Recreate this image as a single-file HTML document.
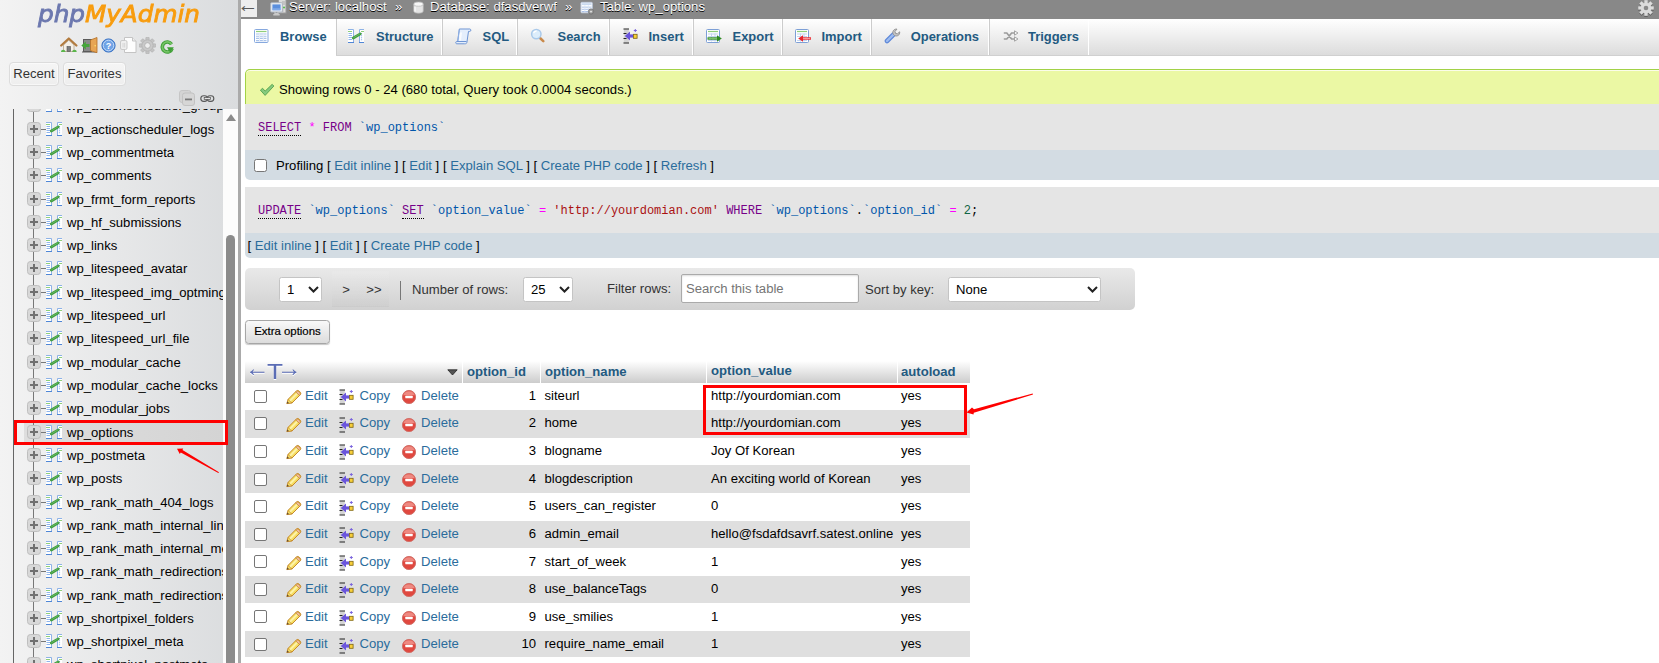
<!DOCTYPE html>
<html lang="en">
<head>
<meta charset="utf-8">
<title>localhost / localhost / dfasdverwf / wp_options | phpMyAdmin</title>
<style>
*{box-sizing:border-box}
html,body{margin:0;padding:0}
body{width:1659px;height:663px;overflow:hidden;position:relative;background:#fff;font-family:"Liberation Sans",Arial,sans-serif;font-size:13.12px;color:#000;line-height:1}
a{color:#2a6c9c;text-decoration:none}
.abs{position:absolute}

/* ---------- navigation ---------- */
#nav{position:absolute;left:0;top:0;width:238px;height:663px;background:linear-gradient(to right,#f3f3f3 0%,#dadcde 100%);overflow:hidden}
#resizer{position:absolute;left:238px;top:0;width:3px;height:663px;background:#aaa}
#logo{position:absolute;left:37.500px;top:-2.500px;font-family:"DejaVu Sans","Liberation Sans",sans-serif;font-size:23.500px;font-style:italic;line-height:32px;white-space:nowrap;transform:scaleX(1.05);transform-origin:0 0;-webkit-text-stroke:.85px currentColor}
#logo .p{color:#6c78af}
#logo .m{color:#f89c0e}
.navbtn{position:absolute;top:62px;height:24px;border:1px solid #dcdcdc;border-radius:4px;background:linear-gradient(#f5f5f5,#eeeeee);box-shadow:inset 0 0 0 1px rgba(255,255,255,.5);color:#333;font-size:13.12px;line-height:22px;text-align:center}
#tree{position:absolute;left:0;top:109px;width:223px;height:554px;overflow:hidden}
#tree .outer{position:absolute;left:13px;top:0;width:1px;height:554px;background:#666}
#tree .vline{position:absolute;left:33px;top:0;width:1px;height:554px;background:#777}
.ti{position:absolute;left:0;width:260px;height:24px;white-space:nowrap}
.ti .box{position:absolute;left:27px;top:5px;width:14px;height:14px;border:1px solid #bfbfbf;border-radius:3.500px;background:#d8d8d8}
.ti .box:before{content:"";position:absolute;left:2px;top:5px;width:8px;height:2px;background:#707070}
.ti .box:after{content:"";position:absolute;left:5px;top:2px;width:2px;height:8px;background:#707070}
.ti .hl{position:absolute;left:41px;top:12px;width:12px;height:1px;background:#777}
.ti svg{position:absolute;left:46px;top:4px}
.ti .t{position:absolute;left:67px;top:5px;font-size:13.12px;line-height:16px;color:#000}
#sbtrack{position:absolute;left:223px;top:109px;width:15px;height:554px;background:#fcfcfc}
#sbthumb{position:absolute;left:226px;top:235px;width:9px;height:440px;border-radius:5px;background:#8b8b8b}

/* ---------- main ---------- */
#topbar{position:absolute;left:241px;top:0;width:1418px;height:19px;background:#888;color:#fff;text-shadow:0 1px 0 #000;white-space:nowrap}
#topbar .tog{position:absolute;left:0;top:0;width:16px;height:17px;background:#eee;color:#5a5a5a;text-shadow:none;font-size:21px;line-height:10px;text-align:center;overflow:hidden;text-indent:-4px;letter-spacing:-2px}
#topbar .bc{position:absolute;top:-1px;font-size:13.12px;line-height:15px}
#tabs{position:absolute;left:241px;top:19px;width:1418px;height:37px;background:linear-gradient(#fff,#dcdcdc);border-bottom:1px solid #d0d0d0}
.tab{position:absolute;top:0;height:36px;border-right:1px solid #fff;border-left:1px solid #ccc;background:linear-gradient(#fff,#dddddd)}
.tab.active{background:#fff;height:37px;border-left:0}
.tab b{position:absolute;top:10px;font-size:12.95px;margin-left:-.5px;line-height:15px;color:#235a81;white-space:nowrap}
.tab svg{position:absolute;top:9px}

#ok{position:absolute;left:245px;top:69px;width:1420px;height:35px;background:#ebf8a4;border:1px solid #a2d246;border-bottom:0;border-radius:5px 5px 0 0;box-shadow:inset 0 1px 0 #fbfde9}
#ok span{position:absolute;left:33px;top:12px;line-height:16px;white-space:nowrap}
.sql{position:absolute;left:245px;width:1420px;background:#e5e5e5;font-family:"Liberation Mono","DejaVu Sans Mono",monospace;font-size:12px;white-space:pre}
.sql span.l{position:absolute;left:13px;line-height:16px}
.kw{color:#708;}
.kw u{text-decoration:none;border-bottom:1px dotted #000}
.st{color:#a11}
.nu{color:#164}
.pu{color:#05a}
.op{color:#f0f}
.tools{position:absolute;left:245px;width:1420px;background:#d3dce3;border-radius:0 0 0 5px;white-space:nowrap}
.tools span{position:absolute;line-height:16px}

#navbar{position:absolute;left:245px;top:268px;width:890px;height:42px;border-radius:5px;background:linear-gradient(#e9e9e9,#d1d1d1)}
.sel{position:absolute;height:25px;background:#fff;border:1px solid #c4c4c4;border-radius:2.500px;font-size:13.12px;line-height:23px;padding-left:7px}
.sel svg{position:absolute;right:2.500px;top:8px}
.lbl{position:absolute;line-height:16px;color:#333;white-space:nowrap}

#extra{position:absolute;left:245px;top:320px;width:85px;height:24px;border:1px solid #a6a6a6;border-radius:3.500px;background:linear-gradient(#f9f9f9,#dcdcdc);box-shadow:0 1px 1px rgba(0,0,0,.22);font-size:11.400px;line-height:21px;text-align:center;color:#000;-webkit-text-stroke:.2px #000}

#thead{position:absolute;left:245px;top:361px;width:725px;height:22px;background:linear-gradient(#fff,#cccccc)}
#thead .sep{position:absolute;top:0;width:1px;height:22px;background:#fff}
#thead .h{position:absolute;top:2px;font-weight:bold;font-size:13.12px;line-height:18px;color:#235a81;white-space:nowrap}
.row{position:absolute;left:245px;width:725px;height:27.55px;white-space:nowrap}
.row.even{background:#dfdfdf}
.row span,.row a{position:absolute;top:5px;line-height:16px}
.row .cb{position:absolute;left:9px;top:7px;width:13px;height:13px;border:1px solid #767676;border-radius:2px;background:#fff}
.row svg{position:absolute;top:6px}
.row .id{right:434px;text-align:right}
.tab .ic{position:absolute;top:9px;width:16px;height:16px}
.tab .ic svg{position:static;display:block}
.cb{position:absolute;display:block;width:13px;height:13px;border:1px solid #767676;border-radius:2.500px;background:#fff}
.pg{position:absolute;top:3px;height:36px;line-height:38px;background:linear-gradient(rgba(255,255,255,.10),rgba(0,0,0,.02));border-bottom:1px solid rgba(0,0,0,.05);text-align:center;color:#333;font-size:13.12px}
#navbar .bar{position:absolute;left:155px;top:13px;width:1px;height:19px;background:#777}
.inp{position:absolute;height:29px;background:#fff;border:1px solid #aaa;border-radius:2px;color:#757575;font-size:13.12px;line-height:27px;padding-left:4px;box-shadow:inset 0 1px 2px #ddd}
#thead .dd{position:absolute;left:202px;top:8px}
#tree .hi{position:absolute;left:24px;top:314px;width:199px;height:19px;background:linear-gradient(to right,#dedede,#d4d4d4)}
#thead .ar{position:absolute;top:-5px;font-size:24px;line-height:24px;color:#5b6db5;text-shadow:0 1px 0 #fff;transform:scaleX(1.02);transform-origin:0 0}
#thead .T{position:absolute;left:22px;top:-1px;font-size:22px;line-height:24px;color:#5b6db5;text-shadow:0 1px 0 #fff;transform:scaleX(1.19);transform-origin:0 0}
</style>
</head>
<body>

<div id="nav">
  <div id="logo"><span class="p">php</span><span class="m">MyAdmin</span></div>
  <svg class="abs" style="left:60px;top:37px" width="18" height="16" viewBox="0 0 18 16"><path d="M3.500 8v6.500h10.500v-6.500l-5.200-4.800z" fill="#f4f0e8" stroke="#b8a48a" stroke-width=".8"/><rect x="7" y="9.500" width="3.500" height="5" fill="#7d7d7d" stroke="#555" stroke-width=".6"/><path d="M1.200 8.500l7.600-7 7.600 7" fill="none" stroke="#b27b3e" stroke-width="2.200" stroke-linejoin="round" stroke-linecap="round"/><path d="M1 15c0-1.500 1-2.200 2.200-2.200s2.300.7 2.300 2.200zM12.200 15c0-1.500 1-2.200 2.300-2.200s2.200.7 2.200 2.200z" fill="#5ab54b"/></svg>
<svg class="abs" style="left:81px;top:37px" width="17" height="16" viewBox="0 0 17 16"><rect x="2.500" y="2.500" width="8" height="12" fill="#8a8a8a" stroke="#5a5a5a"/><path d="M1 15h15" stroke="#5a5a5a" stroke-width="1"/><path d="M9.500 3l6.500-2.500v15.200l-6.500-2z" fill="#e7a555" stroke="#b46f24" stroke-width=".8"/><circle cx="14.200" cy="8.800" r=".8" fill="#ffe36e"/><path d="M8.500 8.500h-5" stroke="#46a53b" stroke-width="3"/><path d="M.3 8.500l4.500-4v8z" fill="#46a53b"/></svg>
<svg class="abs" style="left:101px;top:38px" width="15" height="15" viewBox="0 0 15 15"><circle cx="7.500" cy="7.500" r="6.600" fill="#5d93dd" stroke="#3b73c4" stroke-width="1"/><circle cx="7.500" cy="7.500" r="5.300" fill="#6fa3e6" stroke="#c4dbf7" stroke-width="1"/><text x="7.500" y="10.800" text-anchor="middle" font-family="Liberation Sans,sans-serif" font-weight="bold" font-size="9" fill="#fff">?</text></svg>
<svg class="abs" style="left:120px;top:37px" width="17" height="16" viewBox="0 0 17 16"><path d="M4.500.500h8l3.500 3.500v11.500h-11.500z" fill="#fdfdfd" stroke="#c4c4c4"/><path d="M12.500.500v3.500h3.500" fill="#eee" stroke="#c4c4c4"/><rect x=".5" y="3.500" width="6.500" height="9" rx="1.500" fill="#efefef" stroke="#c9c9c9"/><path d="M3 6v4.500M4.700 6v4.500" stroke="#d6d6d6" stroke-width="1"/></svg>
<svg class="abs" style="left:139px;top:37px" width="17" height="17" viewBox="-8.500 -8.500 17 17"><g fill="#c3c3c3" stroke="#aaaaaa" stroke-width=".5"><rect x="-1.700" y="-8.200" width="3.400" height="16.400" rx=".6"/><rect x="-1.700" y="-8.200" width="3.400" height="16.400" rx=".6" transform="rotate(45)"/><rect x="-1.700" y="-8.200" width="3.400" height="16.400" rx=".6" transform="rotate(90)"/><rect x="-1.700" y="-8.200" width="3.400" height="16.400" rx=".6" transform="rotate(135)"/></g><circle r="5.600" fill="#c9c9c9" stroke="#adadad" stroke-width=".6"/><circle r="2.800" fill="#eeeeee" stroke="#a6a6a6" stroke-width=".7"/></svg>
<svg class="abs" style="left:160px;top:39px" width="14" height="15" viewBox="0 0 14 15"><path d="M11.500 5.200a5 5 0 1 0 .6 4.200" fill="none" stroke="#3f9f37" stroke-width="3.600"/><path d="M11.500 5.200a5 5 0 1 0 .6 4.200" fill="none" stroke="#74c365" stroke-width="1.800"/><path d="M7 8.200h6.800l-3.600 5.600z" fill="#3f9f37"/></svg>
<!-- tree controls -->
<svg class="abs" style="left:179px;top:90px" width="17" height="16" viewBox="0 0 17 16"><rect x=".5" y=".5" width="11.500" height="12" rx="2.500" fill="#d4d4d4" stroke="#c6c6c6"/><rect x="3.500" y="3" width="12" height="12.500" rx="2.500" fill="#d6d6d6" stroke="#c2c2c2"/><rect x="6" y="8.500" width="7" height="1.800" fill="#7a7a7a"/></svg>
<svg class="abs" style="left:200px;top:94px" width="15" height="9" viewBox="0 0 15 9"><rect x=".8" y="1.700" width="6.600" height="5.600" rx="2.800" fill="none" stroke="#585858" stroke-width="1.150"/><rect x="7.200" y="1.700" width="6.600" height="5.600" rx="2.800" fill="none" stroke="#585858" stroke-width="1.150"/><rect x="4.200" y="3.600" width="6.200" height="1.800" fill="#e2e2e2" stroke="#505050" stroke-width=".7"/></svg>

  <div class="navbtn" style="left:9px;width:50px">Recent</div>
  <div class="navbtn" style="left:63px;width:63px">Favorites</div>
  
  <div id="tree">
    <div class="hi"></div><div class="outer"></div><div class="vline"></div>
<div class="ti" style="top:-16.00px"><i class="box"></i><i class="hl"></i><svg width="16" height="16" viewBox="0 0 16 16"><path d="M0 1.500h5.500v13h-5.500z" fill="#fff"/><path d="M16 1.500h-4.500v13h4.500z" fill="#fff"/><path d="M0 1.500h5.500v13M16 1.500h-4.500v13" fill="none" stroke="#8db2e6" stroke-width="1"/><path d="M0 14.500h6M11 14.500h5" stroke="#4f86d6" stroke-width="1"/><path d="M0 3.500h4M13 3.500h3" stroke="#8fce7a" stroke-width="1"/><path d="M.5 5.500h3.500M.5 7.500h3.500M.5 9.500h3.500M.5 11.500h3.500" stroke="#8fb4ea" stroke-width="1"/><path d="M13.500 5.200v8" stroke="#8fb4ea" stroke-width="1.200" stroke-dasharray="1.100 .9"/><path d="M5.300 10l7-4.200" fill="none" stroke="#3f9b3f" stroke-width="2.700" stroke-linecap="round"/><path d="M5.700 9.600l6.200-3.700" fill="none" stroke="#6fbf66" stroke-width=".8" stroke-linecap="round"/></svg><a class="t">wp_actionscheduler_group</a></div>
<div class="ti" style="top:8.00px"><i class="box"></i><i class="hl"></i><svg width="16" height="16" viewBox="0 0 16 16"><path d="M0 1.500h5.500v13h-5.500z" fill="#fff"/><path d="M16 1.500h-4.500v13h4.500z" fill="#fff"/><path d="M0 1.500h5.500v13M16 1.500h-4.500v13" fill="none" stroke="#8db2e6" stroke-width="1"/><path d="M0 14.500h6M11 14.500h5" stroke="#4f86d6" stroke-width="1"/><path d="M0 3.500h4M13 3.500h3" stroke="#8fce7a" stroke-width="1"/><path d="M.5 5.500h3.500M.5 7.500h3.500M.5 9.500h3.500M.5 11.500h3.500" stroke="#8fb4ea" stroke-width="1"/><path d="M13.500 5.200v8" stroke="#8fb4ea" stroke-width="1.200" stroke-dasharray="1.100 .9"/><path d="M5.300 10l7-4.200" fill="none" stroke="#3f9b3f" stroke-width="2.700" stroke-linecap="round"/><path d="M5.700 9.600l6.200-3.700" fill="none" stroke="#6fbf66" stroke-width=".8" stroke-linecap="round"/></svg><a class="t">wp_actionscheduler_logs</a></div>
<div class="ti" style="top:31.00px"><i class="box"></i><i class="hl"></i><svg width="16" height="16" viewBox="0 0 16 16"><path d="M0 1.500h5.500v13h-5.500z" fill="#fff"/><path d="M16 1.500h-4.500v13h4.500z" fill="#fff"/><path d="M0 1.500h5.500v13M16 1.500h-4.500v13" fill="none" stroke="#8db2e6" stroke-width="1"/><path d="M0 14.500h6M11 14.500h5" stroke="#4f86d6" stroke-width="1"/><path d="M0 3.500h4M13 3.500h3" stroke="#8fce7a" stroke-width="1"/><path d="M.5 5.500h3.500M.5 7.500h3.500M.5 9.500h3.500M.5 11.500h3.500" stroke="#8fb4ea" stroke-width="1"/><path d="M13.500 5.200v8" stroke="#8fb4ea" stroke-width="1.200" stroke-dasharray="1.100 .9"/><path d="M5.300 10l7-4.200" fill="none" stroke="#3f9b3f" stroke-width="2.700" stroke-linecap="round"/><path d="M5.700 9.600l6.200-3.700" fill="none" stroke="#6fbf66" stroke-width=".8" stroke-linecap="round"/></svg><a class="t">wp_commentmeta</a></div>
<div class="ti" style="top:54.00px"><i class="box"></i><i class="hl"></i><svg width="16" height="16" viewBox="0 0 16 16"><path d="M0 1.500h5.500v13h-5.500z" fill="#fff"/><path d="M16 1.500h-4.500v13h4.500z" fill="#fff"/><path d="M0 1.500h5.500v13M16 1.500h-4.500v13" fill="none" stroke="#8db2e6" stroke-width="1"/><path d="M0 14.500h6M11 14.500h5" stroke="#4f86d6" stroke-width="1"/><path d="M0 3.500h4M13 3.500h3" stroke="#8fce7a" stroke-width="1"/><path d="M.5 5.500h3.500M.5 7.500h3.500M.5 9.500h3.500M.5 11.500h3.500" stroke="#8fb4ea" stroke-width="1"/><path d="M13.500 5.200v8" stroke="#8fb4ea" stroke-width="1.200" stroke-dasharray="1.100 .9"/><path d="M5.300 10l7-4.200" fill="none" stroke="#3f9b3f" stroke-width="2.700" stroke-linecap="round"/><path d="M5.700 9.600l6.200-3.700" fill="none" stroke="#6fbf66" stroke-width=".8" stroke-linecap="round"/></svg><a class="t">wp_comments</a></div>
<div class="ti" style="top:78.00px"><i class="box"></i><i class="hl"></i><svg width="16" height="16" viewBox="0 0 16 16"><path d="M0 1.500h5.500v13h-5.500z" fill="#fff"/><path d="M16 1.500h-4.500v13h4.500z" fill="#fff"/><path d="M0 1.500h5.500v13M16 1.500h-4.500v13" fill="none" stroke="#8db2e6" stroke-width="1"/><path d="M0 14.500h6M11 14.500h5" stroke="#4f86d6" stroke-width="1"/><path d="M0 3.500h4M13 3.500h3" stroke="#8fce7a" stroke-width="1"/><path d="M.5 5.500h3.500M.5 7.500h3.500M.5 9.500h3.500M.5 11.500h3.500" stroke="#8fb4ea" stroke-width="1"/><path d="M13.500 5.200v8" stroke="#8fb4ea" stroke-width="1.200" stroke-dasharray="1.100 .9"/><path d="M5.300 10l7-4.200" fill="none" stroke="#3f9b3f" stroke-width="2.700" stroke-linecap="round"/><path d="M5.700 9.600l6.200-3.700" fill="none" stroke="#6fbf66" stroke-width=".8" stroke-linecap="round"/></svg><a class="t">wp_frmt_form_reports</a></div>
<div class="ti" style="top:101.00px"><i class="box"></i><i class="hl"></i><svg width="16" height="16" viewBox="0 0 16 16"><path d="M0 1.500h5.500v13h-5.500z" fill="#fff"/><path d="M16 1.500h-4.500v13h4.500z" fill="#fff"/><path d="M0 1.500h5.500v13M16 1.500h-4.500v13" fill="none" stroke="#8db2e6" stroke-width="1"/><path d="M0 14.500h6M11 14.500h5" stroke="#4f86d6" stroke-width="1"/><path d="M0 3.500h4M13 3.500h3" stroke="#8fce7a" stroke-width="1"/><path d="M.5 5.500h3.500M.5 7.500h3.500M.5 9.500h3.500M.5 11.500h3.500" stroke="#8fb4ea" stroke-width="1"/><path d="M13.500 5.200v8" stroke="#8fb4ea" stroke-width="1.200" stroke-dasharray="1.100 .9"/><path d="M5.300 10l7-4.200" fill="none" stroke="#3f9b3f" stroke-width="2.700" stroke-linecap="round"/><path d="M5.700 9.600l6.200-3.700" fill="none" stroke="#6fbf66" stroke-width=".8" stroke-linecap="round"/></svg><a class="t">wp_hf_submissions</a></div>
<div class="ti" style="top:124.00px"><i class="box"></i><i class="hl"></i><svg width="16" height="16" viewBox="0 0 16 16"><path d="M0 1.500h5.500v13h-5.500z" fill="#fff"/><path d="M16 1.500h-4.500v13h4.500z" fill="#fff"/><path d="M0 1.500h5.500v13M16 1.500h-4.500v13" fill="none" stroke="#8db2e6" stroke-width="1"/><path d="M0 14.500h6M11 14.500h5" stroke="#4f86d6" stroke-width="1"/><path d="M0 3.500h4M13 3.500h3" stroke="#8fce7a" stroke-width="1"/><path d="M.5 5.500h3.500M.5 7.500h3.500M.5 9.500h3.500M.5 11.500h3.500" stroke="#8fb4ea" stroke-width="1"/><path d="M13.500 5.200v8" stroke="#8fb4ea" stroke-width="1.200" stroke-dasharray="1.100 .9"/><path d="M5.300 10l7-4.200" fill="none" stroke="#3f9b3f" stroke-width="2.700" stroke-linecap="round"/><path d="M5.700 9.600l6.200-3.700" fill="none" stroke="#6fbf66" stroke-width=".8" stroke-linecap="round"/></svg><a class="t">wp_links</a></div>
<div class="ti" style="top:147.00px"><i class="box"></i><i class="hl"></i><svg width="16" height="16" viewBox="0 0 16 16"><path d="M0 1.500h5.500v13h-5.500z" fill="#fff"/><path d="M16 1.500h-4.500v13h4.500z" fill="#fff"/><path d="M0 1.500h5.500v13M16 1.500h-4.500v13" fill="none" stroke="#8db2e6" stroke-width="1"/><path d="M0 14.500h6M11 14.500h5" stroke="#4f86d6" stroke-width="1"/><path d="M0 3.500h4M13 3.500h3" stroke="#8fce7a" stroke-width="1"/><path d="M.5 5.500h3.500M.5 7.500h3.500M.5 9.500h3.500M.5 11.500h3.500" stroke="#8fb4ea" stroke-width="1"/><path d="M13.500 5.200v8" stroke="#8fb4ea" stroke-width="1.200" stroke-dasharray="1.100 .9"/><path d="M5.300 10l7-4.200" fill="none" stroke="#3f9b3f" stroke-width="2.700" stroke-linecap="round"/><path d="M5.700 9.600l6.200-3.700" fill="none" stroke="#6fbf66" stroke-width=".8" stroke-linecap="round"/></svg><a class="t">wp_litespeed_avatar</a></div>
<div class="ti" style="top:171.00px"><i class="box"></i><i class="hl"></i><svg width="16" height="16" viewBox="0 0 16 16"><path d="M0 1.500h5.500v13h-5.500z" fill="#fff"/><path d="M16 1.500h-4.500v13h4.500z" fill="#fff"/><path d="M0 1.500h5.500v13M16 1.500h-4.500v13" fill="none" stroke="#8db2e6" stroke-width="1"/><path d="M0 14.500h6M11 14.500h5" stroke="#4f86d6" stroke-width="1"/><path d="M0 3.500h4M13 3.500h3" stroke="#8fce7a" stroke-width="1"/><path d="M.5 5.500h3.500M.5 7.500h3.500M.5 9.500h3.500M.5 11.500h3.500" stroke="#8fb4ea" stroke-width="1"/><path d="M13.500 5.200v8" stroke="#8fb4ea" stroke-width="1.200" stroke-dasharray="1.100 .9"/><path d="M5.300 10l7-4.200" fill="none" stroke="#3f9b3f" stroke-width="2.700" stroke-linecap="round"/><path d="M5.700 9.600l6.200-3.700" fill="none" stroke="#6fbf66" stroke-width=".8" stroke-linecap="round"/></svg><a class="t">wp_litespeed_img_optming</a></div>
<div class="ti" style="top:194.00px"><i class="box"></i><i class="hl"></i><svg width="16" height="16" viewBox="0 0 16 16"><path d="M0 1.500h5.500v13h-5.500z" fill="#fff"/><path d="M16 1.500h-4.500v13h4.500z" fill="#fff"/><path d="M0 1.500h5.500v13M16 1.500h-4.500v13" fill="none" stroke="#8db2e6" stroke-width="1"/><path d="M0 14.500h6M11 14.500h5" stroke="#4f86d6" stroke-width="1"/><path d="M0 3.500h4M13 3.500h3" stroke="#8fce7a" stroke-width="1"/><path d="M.5 5.500h3.500M.5 7.500h3.500M.5 9.500h3.500M.5 11.500h3.500" stroke="#8fb4ea" stroke-width="1"/><path d="M13.500 5.200v8" stroke="#8fb4ea" stroke-width="1.200" stroke-dasharray="1.100 .9"/><path d="M5.300 10l7-4.200" fill="none" stroke="#3f9b3f" stroke-width="2.700" stroke-linecap="round"/><path d="M5.700 9.600l6.200-3.700" fill="none" stroke="#6fbf66" stroke-width=".8" stroke-linecap="round"/></svg><a class="t">wp_litespeed_url</a></div>
<div class="ti" style="top:217.00px"><i class="box"></i><i class="hl"></i><svg width="16" height="16" viewBox="0 0 16 16"><path d="M0 1.500h5.500v13h-5.500z" fill="#fff"/><path d="M16 1.500h-4.500v13h4.500z" fill="#fff"/><path d="M0 1.500h5.500v13M16 1.500h-4.500v13" fill="none" stroke="#8db2e6" stroke-width="1"/><path d="M0 14.500h6M11 14.500h5" stroke="#4f86d6" stroke-width="1"/><path d="M0 3.500h4M13 3.500h3" stroke="#8fce7a" stroke-width="1"/><path d="M.5 5.500h3.500M.5 7.500h3.500M.5 9.500h3.500M.5 11.500h3.500" stroke="#8fb4ea" stroke-width="1"/><path d="M13.500 5.200v8" stroke="#8fb4ea" stroke-width="1.200" stroke-dasharray="1.100 .9"/><path d="M5.300 10l7-4.200" fill="none" stroke="#3f9b3f" stroke-width="2.700" stroke-linecap="round"/><path d="M5.700 9.600l6.200-3.700" fill="none" stroke="#6fbf66" stroke-width=".8" stroke-linecap="round"/></svg><a class="t">wp_litespeed_url_file</a></div>
<div class="ti" style="top:241.00px"><i class="box"></i><i class="hl"></i><svg width="16" height="16" viewBox="0 0 16 16"><path d="M0 1.500h5.500v13h-5.500z" fill="#fff"/><path d="M16 1.500h-4.500v13h4.500z" fill="#fff"/><path d="M0 1.500h5.500v13M16 1.500h-4.500v13" fill="none" stroke="#8db2e6" stroke-width="1"/><path d="M0 14.500h6M11 14.500h5" stroke="#4f86d6" stroke-width="1"/><path d="M0 3.500h4M13 3.500h3" stroke="#8fce7a" stroke-width="1"/><path d="M.5 5.500h3.500M.5 7.500h3.500M.5 9.500h3.500M.5 11.500h3.500" stroke="#8fb4ea" stroke-width="1"/><path d="M13.500 5.200v8" stroke="#8fb4ea" stroke-width="1.200" stroke-dasharray="1.100 .9"/><path d="M5.300 10l7-4.200" fill="none" stroke="#3f9b3f" stroke-width="2.700" stroke-linecap="round"/><path d="M5.700 9.600l6.200-3.700" fill="none" stroke="#6fbf66" stroke-width=".8" stroke-linecap="round"/></svg><a class="t">wp_modular_cache</a></div>
<div class="ti" style="top:264.00px"><i class="box"></i><i class="hl"></i><svg width="16" height="16" viewBox="0 0 16 16"><path d="M0 1.500h5.500v13h-5.500z" fill="#fff"/><path d="M16 1.500h-4.500v13h4.500z" fill="#fff"/><path d="M0 1.500h5.500v13M16 1.500h-4.500v13" fill="none" stroke="#8db2e6" stroke-width="1"/><path d="M0 14.500h6M11 14.500h5" stroke="#4f86d6" stroke-width="1"/><path d="M0 3.500h4M13 3.500h3" stroke="#8fce7a" stroke-width="1"/><path d="M.5 5.500h3.500M.5 7.500h3.500M.5 9.500h3.500M.5 11.500h3.500" stroke="#8fb4ea" stroke-width="1"/><path d="M13.500 5.200v8" stroke="#8fb4ea" stroke-width="1.200" stroke-dasharray="1.100 .9"/><path d="M5.300 10l7-4.200" fill="none" stroke="#3f9b3f" stroke-width="2.700" stroke-linecap="round"/><path d="M5.700 9.600l6.200-3.700" fill="none" stroke="#6fbf66" stroke-width=".8" stroke-linecap="round"/></svg><a class="t">wp_modular_cache_locks</a></div>
<div class="ti" style="top:287.00px"><i class="box"></i><i class="hl"></i><svg width="16" height="16" viewBox="0 0 16 16"><path d="M0 1.500h5.500v13h-5.500z" fill="#fff"/><path d="M16 1.500h-4.500v13h4.500z" fill="#fff"/><path d="M0 1.500h5.500v13M16 1.500h-4.500v13" fill="none" stroke="#8db2e6" stroke-width="1"/><path d="M0 14.500h6M11 14.500h5" stroke="#4f86d6" stroke-width="1"/><path d="M0 3.500h4M13 3.500h3" stroke="#8fce7a" stroke-width="1"/><path d="M.5 5.500h3.500M.5 7.500h3.500M.5 9.500h3.500M.5 11.500h3.500" stroke="#8fb4ea" stroke-width="1"/><path d="M13.500 5.200v8" stroke="#8fb4ea" stroke-width="1.200" stroke-dasharray="1.100 .9"/><path d="M5.300 10l7-4.200" fill="none" stroke="#3f9b3f" stroke-width="2.700" stroke-linecap="round"/><path d="M5.700 9.600l6.200-3.700" fill="none" stroke="#6fbf66" stroke-width=".8" stroke-linecap="round"/></svg><a class="t">wp_modular_jobs</a></div>
<div class="ti" style="top:311.00px"><i class="box"></i><i class="hl"></i><svg width="16" height="16" viewBox="0 0 16 16"><path d="M0 1.500h5.500v13h-5.500z" fill="#fff"/><path d="M16 1.500h-4.500v13h4.500z" fill="#fff"/><path d="M0 1.500h5.500v13M16 1.500h-4.500v13" fill="none" stroke="#8db2e6" stroke-width="1"/><path d="M0 14.500h6M11 14.500h5" stroke="#4f86d6" stroke-width="1"/><path d="M0 3.500h4M13 3.500h3" stroke="#8fce7a" stroke-width="1"/><path d="M.5 5.500h3.500M.5 7.500h3.500M.5 9.500h3.500M.5 11.500h3.500" stroke="#8fb4ea" stroke-width="1"/><path d="M13.500 5.200v8" stroke="#8fb4ea" stroke-width="1.200" stroke-dasharray="1.100 .9"/><path d="M5.300 10l7-4.200" fill="none" stroke="#3f9b3f" stroke-width="2.700" stroke-linecap="round"/><path d="M5.700 9.600l6.200-3.700" fill="none" stroke="#6fbf66" stroke-width=".8" stroke-linecap="round"/></svg><a class="t">wp_options</a></div>
<div class="ti" style="top:334.00px"><i class="box"></i><i class="hl"></i><svg width="16" height="16" viewBox="0 0 16 16"><path d="M0 1.500h5.500v13h-5.500z" fill="#fff"/><path d="M16 1.500h-4.500v13h4.500z" fill="#fff"/><path d="M0 1.500h5.500v13M16 1.500h-4.500v13" fill="none" stroke="#8db2e6" stroke-width="1"/><path d="M0 14.500h6M11 14.500h5" stroke="#4f86d6" stroke-width="1"/><path d="M0 3.500h4M13 3.500h3" stroke="#8fce7a" stroke-width="1"/><path d="M.5 5.500h3.500M.5 7.500h3.500M.5 9.500h3.500M.5 11.500h3.500" stroke="#8fb4ea" stroke-width="1"/><path d="M13.500 5.200v8" stroke="#8fb4ea" stroke-width="1.200" stroke-dasharray="1.100 .9"/><path d="M5.300 10l7-4.200" fill="none" stroke="#3f9b3f" stroke-width="2.700" stroke-linecap="round"/><path d="M5.700 9.600l6.200-3.700" fill="none" stroke="#6fbf66" stroke-width=".8" stroke-linecap="round"/></svg><a class="t">wp_postmeta</a></div>
<div class="ti" style="top:357.00px"><i class="box"></i><i class="hl"></i><svg width="16" height="16" viewBox="0 0 16 16"><path d="M0 1.500h5.500v13h-5.500z" fill="#fff"/><path d="M16 1.500h-4.500v13h4.500z" fill="#fff"/><path d="M0 1.500h5.500v13M16 1.500h-4.500v13" fill="none" stroke="#8db2e6" stroke-width="1"/><path d="M0 14.500h6M11 14.500h5" stroke="#4f86d6" stroke-width="1"/><path d="M0 3.500h4M13 3.500h3" stroke="#8fce7a" stroke-width="1"/><path d="M.5 5.500h3.500M.5 7.500h3.500M.5 9.500h3.500M.5 11.500h3.500" stroke="#8fb4ea" stroke-width="1"/><path d="M13.500 5.200v8" stroke="#8fb4ea" stroke-width="1.200" stroke-dasharray="1.100 .9"/><path d="M5.300 10l7-4.200" fill="none" stroke="#3f9b3f" stroke-width="2.700" stroke-linecap="round"/><path d="M5.700 9.600l6.200-3.700" fill="none" stroke="#6fbf66" stroke-width=".8" stroke-linecap="round"/></svg><a class="t">wp_posts</a></div>
<div class="ti" style="top:381.00px"><i class="box"></i><i class="hl"></i><svg width="16" height="16" viewBox="0 0 16 16"><path d="M0 1.500h5.500v13h-5.500z" fill="#fff"/><path d="M16 1.500h-4.500v13h4.500z" fill="#fff"/><path d="M0 1.500h5.500v13M16 1.500h-4.500v13" fill="none" stroke="#8db2e6" stroke-width="1"/><path d="M0 14.500h6M11 14.500h5" stroke="#4f86d6" stroke-width="1"/><path d="M0 3.500h4M13 3.500h3" stroke="#8fce7a" stroke-width="1"/><path d="M.5 5.500h3.500M.5 7.500h3.500M.5 9.500h3.500M.5 11.500h3.500" stroke="#8fb4ea" stroke-width="1"/><path d="M13.500 5.200v8" stroke="#8fb4ea" stroke-width="1.200" stroke-dasharray="1.100 .9"/><path d="M5.300 10l7-4.200" fill="none" stroke="#3f9b3f" stroke-width="2.700" stroke-linecap="round"/><path d="M5.700 9.600l6.200-3.700" fill="none" stroke="#6fbf66" stroke-width=".8" stroke-linecap="round"/></svg><a class="t">wp_rank_math_404_logs</a></div>
<div class="ti" style="top:404.00px"><i class="box"></i><i class="hl"></i><svg width="16" height="16" viewBox="0 0 16 16"><path d="M0 1.500h5.500v13h-5.500z" fill="#fff"/><path d="M16 1.500h-4.500v13h4.500z" fill="#fff"/><path d="M0 1.500h5.500v13M16 1.500h-4.500v13" fill="none" stroke="#8db2e6" stroke-width="1"/><path d="M0 14.500h6M11 14.500h5" stroke="#4f86d6" stroke-width="1"/><path d="M0 3.500h4M13 3.500h3" stroke="#8fce7a" stroke-width="1"/><path d="M.5 5.500h3.500M.5 7.500h3.500M.5 9.500h3.500M.5 11.500h3.500" stroke="#8fb4ea" stroke-width="1"/><path d="M13.500 5.200v8" stroke="#8fb4ea" stroke-width="1.200" stroke-dasharray="1.100 .9"/><path d="M5.300 10l7-4.200" fill="none" stroke="#3f9b3f" stroke-width="2.700" stroke-linecap="round"/><path d="M5.700 9.600l6.200-3.700" fill="none" stroke="#6fbf66" stroke-width=".8" stroke-linecap="round"/></svg><a class="t">wp_rank_math_internal_links</a></div>
<div class="ti" style="top:427.00px"><i class="box"></i><i class="hl"></i><svg width="16" height="16" viewBox="0 0 16 16"><path d="M0 1.500h5.500v13h-5.500z" fill="#fff"/><path d="M16 1.500h-4.500v13h4.500z" fill="#fff"/><path d="M0 1.500h5.500v13M16 1.500h-4.500v13" fill="none" stroke="#8db2e6" stroke-width="1"/><path d="M0 14.500h6M11 14.500h5" stroke="#4f86d6" stroke-width="1"/><path d="M0 3.500h4M13 3.500h3" stroke="#8fce7a" stroke-width="1"/><path d="M.5 5.500h3.500M.5 7.500h3.500M.5 9.500h3.500M.5 11.500h3.500" stroke="#8fb4ea" stroke-width="1"/><path d="M13.500 5.200v8" stroke="#8fb4ea" stroke-width="1.200" stroke-dasharray="1.100 .9"/><path d="M5.300 10l7-4.200" fill="none" stroke="#3f9b3f" stroke-width="2.700" stroke-linecap="round"/><path d="M5.700 9.600l6.200-3.700" fill="none" stroke="#6fbf66" stroke-width=".8" stroke-linecap="round"/></svg><a class="t">wp_rank_math_internal_meta</a></div>
<div class="ti" style="top:450.00px"><i class="box"></i><i class="hl"></i><svg width="16" height="16" viewBox="0 0 16 16"><path d="M0 1.500h5.500v13h-5.500z" fill="#fff"/><path d="M16 1.500h-4.500v13h4.500z" fill="#fff"/><path d="M0 1.500h5.500v13M16 1.500h-4.500v13" fill="none" stroke="#8db2e6" stroke-width="1"/><path d="M0 14.500h6M11 14.500h5" stroke="#4f86d6" stroke-width="1"/><path d="M0 3.500h4M13 3.500h3" stroke="#8fce7a" stroke-width="1"/><path d="M.5 5.500h3.500M.5 7.500h3.500M.5 9.500h3.500M.5 11.500h3.500" stroke="#8fb4ea" stroke-width="1"/><path d="M13.500 5.200v8" stroke="#8fb4ea" stroke-width="1.200" stroke-dasharray="1.100 .9"/><path d="M5.300 10l7-4.200" fill="none" stroke="#3f9b3f" stroke-width="2.700" stroke-linecap="round"/><path d="M5.700 9.600l6.200-3.700" fill="none" stroke="#6fbf66" stroke-width=".8" stroke-linecap="round"/></svg><a class="t">wp_rank_math_redirections</a></div>
<div class="ti" style="top:474.00px"><i class="box"></i><i class="hl"></i><svg width="16" height="16" viewBox="0 0 16 16"><path d="M0 1.500h5.500v13h-5.500z" fill="#fff"/><path d="M16 1.500h-4.500v13h4.500z" fill="#fff"/><path d="M0 1.500h5.500v13M16 1.500h-4.500v13" fill="none" stroke="#8db2e6" stroke-width="1"/><path d="M0 14.500h6M11 14.500h5" stroke="#4f86d6" stroke-width="1"/><path d="M0 3.500h4M13 3.500h3" stroke="#8fce7a" stroke-width="1"/><path d="M.5 5.500h3.500M.5 7.500h3.500M.5 9.500h3.500M.5 11.500h3.500" stroke="#8fb4ea" stroke-width="1"/><path d="M13.500 5.200v8" stroke="#8fb4ea" stroke-width="1.200" stroke-dasharray="1.100 .9"/><path d="M5.300 10l7-4.200" fill="none" stroke="#3f9b3f" stroke-width="2.700" stroke-linecap="round"/><path d="M5.700 9.600l6.200-3.700" fill="none" stroke="#6fbf66" stroke-width=".8" stroke-linecap="round"/></svg><a class="t">wp_rank_math_redirections_cache</a></div>
<div class="ti" style="top:497.00px"><i class="box"></i><i class="hl"></i><svg width="16" height="16" viewBox="0 0 16 16"><path d="M0 1.500h5.500v13h-5.500z" fill="#fff"/><path d="M16 1.500h-4.500v13h4.500z" fill="#fff"/><path d="M0 1.500h5.500v13M16 1.500h-4.500v13" fill="none" stroke="#8db2e6" stroke-width="1"/><path d="M0 14.500h6M11 14.500h5" stroke="#4f86d6" stroke-width="1"/><path d="M0 3.500h4M13 3.500h3" stroke="#8fce7a" stroke-width="1"/><path d="M.5 5.500h3.500M.5 7.500h3.500M.5 9.500h3.500M.5 11.500h3.500" stroke="#8fb4ea" stroke-width="1"/><path d="M13.500 5.200v8" stroke="#8fb4ea" stroke-width="1.200" stroke-dasharray="1.100 .9"/><path d="M5.300 10l7-4.200" fill="none" stroke="#3f9b3f" stroke-width="2.700" stroke-linecap="round"/><path d="M5.700 9.600l6.200-3.700" fill="none" stroke="#6fbf66" stroke-width=".8" stroke-linecap="round"/></svg><a class="t">wp_shortpixel_folders</a></div>
<div class="ti" style="top:520.00px"><i class="box"></i><i class="hl"></i><svg width="16" height="16" viewBox="0 0 16 16"><path d="M0 1.500h5.500v13h-5.500z" fill="#fff"/><path d="M16 1.500h-4.500v13h4.500z" fill="#fff"/><path d="M0 1.500h5.500v13M16 1.500h-4.500v13" fill="none" stroke="#8db2e6" stroke-width="1"/><path d="M0 14.500h6M11 14.500h5" stroke="#4f86d6" stroke-width="1"/><path d="M0 3.500h4M13 3.500h3" stroke="#8fce7a" stroke-width="1"/><path d="M.5 5.500h3.500M.5 7.500h3.500M.5 9.500h3.500M.5 11.500h3.500" stroke="#8fb4ea" stroke-width="1"/><path d="M13.500 5.200v8" stroke="#8fb4ea" stroke-width="1.200" stroke-dasharray="1.100 .9"/><path d="M5.300 10l7-4.200" fill="none" stroke="#3f9b3f" stroke-width="2.700" stroke-linecap="round"/><path d="M5.700 9.600l6.200-3.700" fill="none" stroke="#6fbf66" stroke-width=".8" stroke-linecap="round"/></svg><a class="t">wp_shortpixel_meta</a></div>
<div class="ti" style="top:543.00px"><i class="box"></i><i class="hl"></i><svg width="16" height="16" viewBox="0 0 16 16"><path d="M0 1.500h5.500v13h-5.500z" fill="#fff"/><path d="M16 1.500h-4.500v13h4.500z" fill="#fff"/><path d="M0 1.500h5.500v13M16 1.500h-4.500v13" fill="none" stroke="#8db2e6" stroke-width="1"/><path d="M0 14.500h6M11 14.500h5" stroke="#4f86d6" stroke-width="1"/><path d="M0 3.500h4M13 3.500h3" stroke="#8fce7a" stroke-width="1"/><path d="M.5 5.500h3.500M.5 7.500h3.500M.5 9.500h3.500M.5 11.500h3.500" stroke="#8fb4ea" stroke-width="1"/><path d="M13.500 5.200v8" stroke="#8fb4ea" stroke-width="1.200" stroke-dasharray="1.100 .9"/><path d="M5.300 10l7-4.200" fill="none" stroke="#3f9b3f" stroke-width="2.700" stroke-linecap="round"/><path d="M5.700 9.600l6.200-3.700" fill="none" stroke="#6fbf66" stroke-width=".8" stroke-linecap="round"/></svg><a class="t">wp_shortpixel_postmeta</a></div>
  </div>
  <div id="sbtrack"></div>
  <svg class="abs" style="left:226px;top:114px" width="10" height="7" viewBox="0 0 10 7"><path d="M5 0l5 7h-10z" fill="#8b8b8b"/></svg>
  <div id="sbthumb"></div>
</div>
<div id="resizer"></div>

<div id="topbar">
  <div class="tog">&#8592;</div>
<svg class="abs" style="left:29px;top:-1px" width="17" height="17" viewBox="0 0 17 17"><rect x="8.500" y=".5" width="7.500" height="13.500" fill="#dcdcdc" stroke="#9a9a9a"/><path d="M12 3h3M12 5h3" stroke="#a4a4a4" stroke-width=".9"/><circle cx="14" cy="8.500" r="1" fill="#4fb843"/><path d="M12.500 10v3" stroke="#b5b5b5" stroke-width="1.600"/><rect x=".7" y="3.700" width="11.600" height="9.300" rx=".8" fill="#eef1f6" stroke="#aab2bf"/><rect x="2.400" y="5.400" width="8.200" height="5.900" fill="#5b8fde"/><path d="M2.400 9.300h8.200v2h-8.200z" fill="#8fb4ec" opacity=".7"/><path d="M5 13.200v1.600h3v-1.600M3.300 15.700h6.400" stroke="#c9c9c9" stroke-width="1.400" fill="none"/></svg>
<svg class="abs" style="left:172px;top:1px" width="11" height="13" viewBox="0 0 13 16"><path d="M.7 3.800v8.800c0 3.200 11.600 3.200 11.600 0v-8.800z" fill="#e4e4e4" stroke="#b9b9b9" stroke-width=".9"/><ellipse cx="6.500" cy="3.800" rx="5.800" ry="2.600" fill="#f7f7f7" stroke="#b9b9b9" stroke-width=".9"/><path d="M2.200 7v6" stroke="#fff" stroke-width="1.600" opacity=".8"/></svg>
<svg class="abs" style="left:339px;top:1px" width="15" height="14" viewBox="0 0 16 16"><rect x=".5" y="1.500" width="13" height="12" rx="1" fill="#fff" stroke="#b9c7dd"/><rect x="1.500" y="2.500" width="11" height="2.200" fill="#c9d9ef"/><path d="M1.500 7h11M1.500 9.500h11M1.500 12h11" stroke="#a9c0e6" stroke-width="1.100"/><path d="M5 5v8M9 5v8" stroke="#d7e2f4" stroke-width="1"/><circle cx="12" cy="12" r="3" fill="#9b9b9b" stroke="#6c6c6c" stroke-width=".8"/><circle cx="12" cy="12" r="1" fill="#eee"/></svg>
<svg class="abs" style="left:1396.500px;top:0px;filter:drop-shadow(0 1px 0 rgba(0,0,0,.35))" width="16" height="16" viewBox="-8 -8 16 16"><g fill="#dcdcdc" stroke="#e6e6e6" stroke-width=".3"><rect x="-1.600" y="-7.700" width="3.200" height="15.400" rx=".5"/><rect x="-1.600" y="-7.700" width="3.200" height="15.400" rx=".5" transform="rotate(45)"/><rect x="-1.600" y="-7.700" width="3.200" height="15.400" rx=".5" transform="rotate(90)"/><rect x="-1.600" y="-7.700" width="3.200" height="15.400" rx=".5" transform="rotate(135)"/></g><circle r="5.200" fill="#dcdcdc"/><circle r="2.300" fill="#8a8a8a"/></svg>

  <span class="bc" style="left:48px">Server: localhost</span>
  <span class="bc" style="left:154px">&raquo;</span>
  <span class="bc" style="left:189px">Database: dfasdverwf</span>
  <span class="bc" style="left:324px">&raquo;</span>
  <span class="bc" style="left:359px">Table: wp_options</span>
</div>

<div id="tabs">
<div class="tab active" style="left:0;width:95px">
  <svg style="left:13px" width="16" height="16" viewBox="0 0 16 16"><rect x="0.500" y="1.500" width="13.500" height="13" rx="1" fill="#fff" stroke="#86a8de"/><path d="M2 3.500h10.500" stroke="#8fce7a" stroke-width="1.200"/><path d="M2 6h10.500M2 8.200h10.500M2 10.400h10.500M2 12.600h10.500" stroke="#a9c3ea" stroke-width="1.100"/><path d="M5.500 5.500v8M9.300 5.500v8" stroke="#e3ebf8" stroke-width="1"/></svg>
  <b style="left:39.500px">Browse</b>
</div>
<div class="tab" style="left:95px;width:106px">
  <span class="ic" style="left:11px"><svg width="16" height="16" viewBox="0 0 16 16"><path d="M0 1.500h5.500v13h-5.500z" fill="#fff"/><path d="M16 1.500h-4.500v13h4.500z" fill="#fff"/><path d="M0 1.500h5.500v13M16 1.500h-4.500v13" fill="none" stroke="#8db2e6" stroke-width="1"/><path d="M0 14.500h6M11 14.500h5" stroke="#4f86d6" stroke-width="1"/><path d="M0 3.500h4M13 3.500h3" stroke="#8fce7a" stroke-width="1"/><path d="M.5 5.500h3.500M.5 7.500h3.500M.5 9.500h3.500M.5 11.500h3.500" stroke="#8fb4ea" stroke-width="1"/><path d="M13.500 5.200v8" stroke="#8fb4ea" stroke-width="1.200" stroke-dasharray="1.100 .9"/><path d="M5.300 10l7-4.200" fill="none" stroke="#3f9b3f" stroke-width="2.700" stroke-linecap="round"/><path d="M5.700 9.600l6.200-3.700" fill="none" stroke="#6fbf66" stroke-width=".8" stroke-linecap="round"/></svg></span>
  <b style="left:39.500px">Structure</b>
</div>
<div class="tab" style="left:201px;width:75px">
  <svg style="left:12px" width="17" height="17" viewBox="0 0 17 17"><path d="M4.300 1h10.500c1.400 0 1.400 2.400 0 2.400h-1.300l-1.600 11c-.2 1.200-1 1.400-2.200 1.400h-8c-1.300 0-1.300-2.300 0-2.300h1z" fill="#e4eefc" stroke="#6e95d4" stroke-linejoin="round"/><path d="M2.700 13.500l1.600-11.500" stroke="#8fb0e4" fill="none"/><path d="M2 13.500h9.500" stroke="#6e95d4"/><path d="M6 4.500l-1 8" stroke="#fff" stroke-width="2" opacity=".8"/></svg>
  <b style="left:40px">SQL</b>
</div>
<div class="tab" style="left:276px;width:92px">
  <svg style="left:12px" width="16" height="16" viewBox="0 0 16 16"><path d="M9.500 9.500l3.800 3.600" stroke="#c98a4b" stroke-width="2.600" stroke-linecap="round"/><circle cx="6.300" cy="6.100" r="4.700" fill="#dcedfb" stroke="#a9c9ea" stroke-width="1.500"/><path d="M3.600 5.200a3 3 0 0 1 3-2.200" stroke="#fff" stroke-width="1.300" fill="none"/></svg>
  <b style="left:40px">Search</b>
</div>
<div class="tab" style="left:368px;width:84px">
  <svg style="left:13px" width="16" height="16" viewBox="0 0 16 16"><rect x=".8" y="1.200" width="5" height="13.600" fill="#d4d4d4"/><path d="M.5 1h5.500M.5 15h5.500M.5 5.500h3M.5 10.500h3" stroke="#222" stroke-width="1.200" fill="none"/><path d="M10 8h-5" stroke="#6a55dc" stroke-width="3.200"/><path d="M1.800 8l5.200-4.500v9z" fill="#6a55dc"/><rect x="10.500" y="6.300" width="3.600" height="4" fill="#f8cf3a" stroke="#7d6410" stroke-width=".8"/><path d="M12.300 1v3M10.800 2.500h3" stroke="#7a63dd" stroke-width="1"/></svg>
  <b style="left:39px">Insert</b>
</div>
<div class="tab" style="left:452px;width:89px">
  <svg style="left:12px" width="17" height="16" viewBox="0 0 17 16"><rect x="0.500" y="1.500" width="13" height="13" rx="1" fill="#fff" stroke="#7d9fd6"/><path d="M2 3.500h10" stroke="#8fce7a" stroke-width="1.200"/><path d="M2 6h10M2 8.500h10M2 12.500h10M5.500 5.500v8M9 5.500v8" stroke="#c3d4ee" stroke-width="1"/><path d="M1.500 10.500h10" stroke="#2f8a22" stroke-width="2.400"/><path d="M2.500 10.500h8.500" stroke="#8fd07f" stroke-width=".8"/><path d="M11 7.300l4.800 3.200-4.800 3.200z" fill="#2f8a22"/></svg>
  <b style="left:39px">Export</b>
</div>
<div class="tab" style="left:541px;width:89px">
  <svg style="left:12px" width="17" height="16" viewBox="0 0 17 16"><rect x="0.500" y="1.500" width="13" height="13" rx="1" fill="#fff" stroke="#7d9fd6"/><path d="M2 3.500h10" stroke="#8fce7a" stroke-width="1.200"/><path d="M2 6h10M2 8.500h10M2 12.500h10M5.500 5.500v8M9 5.500v8" stroke="#c3d4ee" stroke-width="1"/><path d="M7 10.500h9" stroke="#e8242c" stroke-width="2.400"/><path d="M7.500 10.500h7.800" stroke="#ffb3b3" stroke-width=".8"/><path d="M8 7.300l-4.800 3.200 4.800 3.200z" fill="#e8242c"/></svg>
  <b style="left:39px">Import</b>
</div>
<div class="tab" style="left:630px;width:118px">
  <svg style="left:12px;top:8px" width="17" height="17" viewBox="0 0 17 17"><path d="M3 14l6.500-6.500" stroke="#5f88d8" stroke-width="4.600" stroke-linecap="round"/><path d="M3 14l6.500-6.500" stroke="#9dbcf0" stroke-width="2.400" stroke-linecap="round"/><path d="M9.300 7.300c-1.400-2.300.2-5.600 3.700-5.200l-2 2.300.5 1.900 1.900.5 2.300-2c.4 3.500-2.700 5-5.200 3.700z" fill="#c4c4c4" stroke="#8f8f8f" stroke-width=".9"/></svg>
  <b style="left:39.200px">Operations</b>
</div>
<div class="tab" style="left:748px;width:100px">
  <svg style="left:13px;top:11px" width="16" height="12" viewBox="0 0 16 12"><path d="M.8 3h3l4.800 6h3.400M.8 9h3l4.800-6h3.400" fill="none" stroke="#9c9c9c" stroke-width="1.700"/><path d="M11.500 .8l3.500 2.200-3.500 2.200zM11.500 6.800l3.500 2.200-3.500 2.200z" fill="#f4f4f4" stroke="#9c9c9c" stroke-width=".9"/></svg>
  <b style="left:38.500px">Triggers</b>
</div>

</div>

<div id="ok"><svg class="abs" style="left:12.800px;top:12px" width="16" height="15" viewBox="0 0 17 15"><path d="M1.500 8.200l2.300-2 2.700 3 7.500-7.200 1.800 1.800-9.300 10z" fill="#86ca7e" stroke="#4f9f48" stroke-width=".9" stroke-linejoin="round"/></svg><span>Showing rows 0 - 24 (680 total, Query took 0.0004 seconds.)</span></div>

<div class="sql" style="top:104px;height:46px"><span class="l" style="top:16px"><span class="kw"><u>SELECT</u></span> <span class="op">*</span> <span class="kw">FROM</span> <span class="pu">`wp_options`</span></span></div>
<div class="tools" style="top:150px;height:30px">
  <i class="cb" style="left:9px;top:9px"></i>
  <span style="left:31px;top:8px">Profiling [ <a>Edit inline</a> ] [ <a>Edit</a> ] [ <a>Explain SQL</a> ] [ <a>Create PHP code</a> ] [ <a>Refresh</a> ]</span>
</div>
<div class="sql" style="top:187px;height:46px;border-radius:0"><span class="l" style="top:16px"><span class="kw"><u>UPDATE</u></span> <span class="pu">`wp_options`</span> <span class="kw"><u>SET</u></span> <span class="pu">`option_value`</span> <span class="op">=</span> <span class="st">'http://yourdomian.com'</span> <span class="kw">WHERE</span> <span class="pu">`wp_options`</span>.<span class="pu">`option_id`</span> <span class="op">=</span> <span class="nu">2</span>;</span></div>
<div class="tools" style="top:233px;height:25px">
  <span style="left:2.500px;top:5px">[ <a>Edit inline</a> ] [ <a>Edit</a> ] [ <a>Create PHP code</a> ]</span>
</div>

<div id="navbar">
  <div class="sel" style="left:34px;top:9px;width:43px">1<svg width="11" height="7" viewBox="0 0 11 7"><path d="M1 1l4.500 4.500 4.500-4.500" fill="none" stroke="#222" stroke-width="2"/></svg></div>
  <div class="pg" style="left:87px;width:25px;text-indent:3px">&gt;</div>
  <div class="pg" style="left:112px;width:32px;text-indent:2px">&gt;&gt;</div>
  <i class="bar"></i>
  <span class="lbl" style="left:167px;top:14px">Number of rows:</span>
  <div class="sel" style="left:278px;top:9px;width:50px">25<svg width="11" height="7" viewBox="0 0 11 7"><path d="M1 1l4.500 4.500 4.500-4.500" fill="none" stroke="#222" stroke-width="2"/></svg></div>
  <span class="lbl" style="left:362px;top:13px">Filter rows:</span>
  <div class="inp" style="left:436px;top:6px;width:178px">Search this table</div>
  <span class="lbl" style="left:620px;top:14px">Sort by key:</span>
  <div class="sel" style="left:703px;top:9px;width:153px">None<svg width="11" height="7" viewBox="0 0 11 7"><path d="M1 1l4.500 4.500 4.500-4.500" fill="none" stroke="#222" stroke-width="2"/></svg></div>
</div>
<div id="extra">Extra options</div>

<div id="thead"><span class="ar" style="left:0px">&#8592;</span><span class="T">T</span><span class="ar" style="left:32px">&#8594;</span><svg class="dd" width="11" height="7" viewBox="0 0 11 7"><path d="M.8.800h9.400l-4.700 5.200z" fill="#555" stroke="#222" stroke-width=".8"/></svg><i class="sep" style="left:217px"></i><span class="h" style="left:222px">option_id</span><i class="sep" style="left:295px"></i><span class="h" style="left:300px">option_name</span><i class="sep" style="left:461px"></i><span class="h" style="left:466px;top:1px">option_value</span><i class="sep" style="left:652px"></i><span class="h" style="left:656px">autoload</span></div>
<div class="row" style="top:382.70px;height:27.58px"><i class="cb" style="left:9px;top:7.30px"></i><svg style="left:41px;top:6.30px" width="16" height="16" viewBox="0 0 16 16"><path d="M.8 14.600l1.300-4.300 8.200-8.200c.9-.9 2-.9 2.900 0l.9.900c.9.900.9 2 0 2.900l-8.200 8.200z" fill="#f6de62" stroke="#c58a2e" stroke-width="1"/><path d="M2.100 10.300l3.800 3.800" stroke="#c58a2e" stroke-width=".9"/><path d="M4 11.800l7.600-7.600" stroke="#fdf3ad" stroke-width="1.800"/><path d="M.8 14.600l.6-2.100 1.600 1.600z" fill="#5a4632"/><path d="M9.600 2.800c1-1 2.300-1 3.200-.1l.8.800c.9.900.9 2.100 0 3.100z" fill="#f0b9a0" stroke="#c58a2e" stroke-width=".8"/></svg><a style="left:60px;top:5.30px">Edit</a><svg style="left:94px;top:6.30px" width="16" height="16" viewBox="0 0 16 16"><rect x=".8" y="1.200" width="5" height="13.600" fill="#d4d4d4"/><path d="M.5 1h5.500M.5 15h5.500M.5 5.500h3M.5 10.500h3" stroke="#222" stroke-width="1.200" fill="none"/><path d="M10 8h-5" stroke="#6a55dc" stroke-width="3.200"/><path d="M1.800 8l5.200-4.500v9z" fill="#6a55dc"/><rect x="10.500" y="6.300" width="3.600" height="4" fill="#f8cf3a" stroke="#7d6410" stroke-width=".8"/><path d="M12.300 1v3M10.800 2.500h3" stroke="#7a63dd" stroke-width="1"/></svg><a style="left:114.500px;top:5.30px">Copy</a><svg style="left:156px;top:6.30px" width="16" height="16" viewBox="0 0 16 16"><circle cx="8" cy="8" r="6.600" fill="#e0483f" stroke="#d2736c" stroke-width="1"/><path d="M2.300 6.300a6 6 0 0 1 11.400 0z" fill="#f19a92" opacity=".8"/><rect x="4.300" y="6.800" width="7.400" height="2.500" rx=".5" fill="#fff"/></svg><a style="left:176px;top:5.30px">Delete</a><span class="id" style="top:5.30px">1</span><span style="left:299.500px;top:5.30px">siteurl</span><span style="left:466px;top:5.30px">http://yourdomian.com</span><span style="left:656px;top:5.30px">yes</span></div>
<div class="row even" style="top:410.28px;height:27.58px"><i class="cb" style="left:9px;top:6.72px"></i><svg style="left:41px;top:6.72px" width="16" height="16" viewBox="0 0 16 16"><path d="M.8 14.600l1.300-4.300 8.200-8.200c.9-.9 2-.9 2.900 0l.9.900c.9.900.9 2 0 2.900l-8.200 8.200z" fill="#f6de62" stroke="#c58a2e" stroke-width="1"/><path d="M2.100 10.300l3.800 3.800" stroke="#c58a2e" stroke-width=".9"/><path d="M4 11.800l7.600-7.600" stroke="#fdf3ad" stroke-width="1.800"/><path d="M.8 14.600l.6-2.100 1.600 1.600z" fill="#5a4632"/><path d="M9.600 2.800c1-1 2.300-1 3.200-.1l.8.800c.9.900.9 2.100 0 3.100z" fill="#f0b9a0" stroke="#c58a2e" stroke-width=".8"/></svg><a style="left:60px;top:4.72px">Edit</a><svg style="left:94px;top:6.72px" width="16" height="16" viewBox="0 0 16 16"><rect x=".8" y="1.200" width="5" height="13.600" fill="#d4d4d4"/><path d="M.5 1h5.500M.5 15h5.500M.5 5.500h3M.5 10.500h3" stroke="#222" stroke-width="1.200" fill="none"/><path d="M10 8h-5" stroke="#6a55dc" stroke-width="3.200"/><path d="M1.800 8l5.200-4.500v9z" fill="#6a55dc"/><rect x="10.500" y="6.300" width="3.600" height="4" fill="#f8cf3a" stroke="#7d6410" stroke-width=".8"/><path d="M12.300 1v3M10.800 2.500h3" stroke="#7a63dd" stroke-width="1"/></svg><a style="left:114.500px;top:4.72px">Copy</a><svg style="left:156px;top:6.72px" width="16" height="16" viewBox="0 0 16 16"><circle cx="8" cy="8" r="6.600" fill="#e0483f" stroke="#d2736c" stroke-width="1"/><path d="M2.300 6.300a6 6 0 0 1 11.400 0z" fill="#f19a92" opacity=".8"/><rect x="4.300" y="6.800" width="7.400" height="2.500" rx=".5" fill="#fff"/></svg><a style="left:176px;top:4.72px">Delete</a><span class="id" style="top:4.72px">2</span><span style="left:299.500px;top:4.72px">home</span><span style="left:466px;top:4.72px">http://yourdomian.com</span><span style="left:656px;top:4.72px">yes</span></div>
<div class="row" style="top:437.86px;height:27.58px"><i class="cb" style="left:9px;top:7.14px"></i><svg style="left:41px;top:6.14px" width="16" height="16" viewBox="0 0 16 16"><path d="M.8 14.600l1.300-4.300 8.200-8.200c.9-.9 2-.9 2.900 0l.9.900c.9.900.9 2 0 2.900l-8.200 8.200z" fill="#f6de62" stroke="#c58a2e" stroke-width="1"/><path d="M2.100 10.300l3.800 3.800" stroke="#c58a2e" stroke-width=".9"/><path d="M4 11.800l7.600-7.600" stroke="#fdf3ad" stroke-width="1.800"/><path d="M.8 14.600l.6-2.100 1.600 1.600z" fill="#5a4632"/><path d="M9.600 2.800c1-1 2.300-1 3.200-.1l.8.800c.9.900.9 2.100 0 3.100z" fill="#f0b9a0" stroke="#c58a2e" stroke-width=".8"/></svg><a style="left:60px;top:5.14px">Edit</a><svg style="left:94px;top:6.14px" width="16" height="16" viewBox="0 0 16 16"><rect x=".8" y="1.200" width="5" height="13.600" fill="#d4d4d4"/><path d="M.5 1h5.500M.5 15h5.500M.5 5.500h3M.5 10.500h3" stroke="#222" stroke-width="1.200" fill="none"/><path d="M10 8h-5" stroke="#6a55dc" stroke-width="3.200"/><path d="M1.800 8l5.200-4.500v9z" fill="#6a55dc"/><rect x="10.500" y="6.300" width="3.600" height="4" fill="#f8cf3a" stroke="#7d6410" stroke-width=".8"/><path d="M12.300 1v3M10.800 2.500h3" stroke="#7a63dd" stroke-width="1"/></svg><a style="left:114.500px;top:5.14px">Copy</a><svg style="left:156px;top:6.14px" width="16" height="16" viewBox="0 0 16 16"><circle cx="8" cy="8" r="6.600" fill="#e0483f" stroke="#d2736c" stroke-width="1"/><path d="M2.300 6.300a6 6 0 0 1 11.400 0z" fill="#f19a92" opacity=".8"/><rect x="4.300" y="6.800" width="7.400" height="2.500" rx=".5" fill="#fff"/></svg><a style="left:176px;top:5.14px">Delete</a><span class="id" style="top:5.14px">3</span><span style="left:299.500px;top:5.14px">blogname</span><span style="left:466px;top:5.14px">Joy Of Korean</span><span style="left:656px;top:5.14px">yes</span></div>
<div class="row even" style="top:465.44px;height:27.58px"><i class="cb" style="left:9px;top:7.56px"></i><svg style="left:41px;top:6.56px" width="16" height="16" viewBox="0 0 16 16"><path d="M.8 14.600l1.300-4.300 8.200-8.200c.9-.9 2-.9 2.900 0l.9.900c.9.900.9 2 0 2.900l-8.200 8.200z" fill="#f6de62" stroke="#c58a2e" stroke-width="1"/><path d="M2.100 10.300l3.800 3.800" stroke="#c58a2e" stroke-width=".9"/><path d="M4 11.800l7.600-7.600" stroke="#fdf3ad" stroke-width="1.800"/><path d="M.8 14.600l.6-2.100 1.600 1.600z" fill="#5a4632"/><path d="M9.600 2.800c1-1 2.300-1 3.200-.1l.8.800c.9.900.9 2.100 0 3.100z" fill="#f0b9a0" stroke="#c58a2e" stroke-width=".8"/></svg><a style="left:60px;top:5.56px">Edit</a><svg style="left:94px;top:6.56px" width="16" height="16" viewBox="0 0 16 16"><rect x=".8" y="1.200" width="5" height="13.600" fill="#d4d4d4"/><path d="M.5 1h5.500M.5 15h5.500M.5 5.500h3M.5 10.500h3" stroke="#222" stroke-width="1.200" fill="none"/><path d="M10 8h-5" stroke="#6a55dc" stroke-width="3.200"/><path d="M1.800 8l5.200-4.500v9z" fill="#6a55dc"/><rect x="10.500" y="6.300" width="3.600" height="4" fill="#f8cf3a" stroke="#7d6410" stroke-width=".8"/><path d="M12.300 1v3M10.800 2.500h3" stroke="#7a63dd" stroke-width="1"/></svg><a style="left:114.500px;top:5.56px">Copy</a><svg style="left:156px;top:6.56px" width="16" height="16" viewBox="0 0 16 16"><circle cx="8" cy="8" r="6.600" fill="#e0483f" stroke="#d2736c" stroke-width="1"/><path d="M2.300 6.300a6 6 0 0 1 11.400 0z" fill="#f19a92" opacity=".8"/><rect x="4.300" y="6.800" width="7.400" height="2.500" rx=".5" fill="#fff"/></svg><a style="left:176px;top:5.56px">Delete</a><span class="id" style="top:5.56px">4</span><span style="left:299.500px;top:5.56px">blogdescription</span><span style="left:466px;top:5.56px">An exciting world of Korean</span><span style="left:656px;top:5.56px">yes</span></div>
<div class="row" style="top:493.02px;height:27.58px"><i class="cb" style="left:9px;top:6.98px"></i><svg style="left:41px;top:6.98px" width="16" height="16" viewBox="0 0 16 16"><path d="M.8 14.600l1.300-4.300 8.200-8.200c.9-.9 2-.9 2.900 0l.9.900c.9.900.9 2 0 2.900l-8.200 8.200z" fill="#f6de62" stroke="#c58a2e" stroke-width="1"/><path d="M2.100 10.300l3.800 3.800" stroke="#c58a2e" stroke-width=".9"/><path d="M4 11.800l7.600-7.600" stroke="#fdf3ad" stroke-width="1.800"/><path d="M.8 14.600l.6-2.100 1.600 1.600z" fill="#5a4632"/><path d="M9.600 2.800c1-1 2.300-1 3.200-.1l.8.800c.9.900.9 2.100 0 3.100z" fill="#f0b9a0" stroke="#c58a2e" stroke-width=".8"/></svg><a style="left:60px;top:4.98px">Edit</a><svg style="left:94px;top:6.98px" width="16" height="16" viewBox="0 0 16 16"><rect x=".8" y="1.200" width="5" height="13.600" fill="#d4d4d4"/><path d="M.5 1h5.500M.5 15h5.500M.5 5.500h3M.5 10.500h3" stroke="#222" stroke-width="1.200" fill="none"/><path d="M10 8h-5" stroke="#6a55dc" stroke-width="3.200"/><path d="M1.800 8l5.200-4.500v9z" fill="#6a55dc"/><rect x="10.500" y="6.300" width="3.600" height="4" fill="#f8cf3a" stroke="#7d6410" stroke-width=".8"/><path d="M12.300 1v3M10.800 2.500h3" stroke="#7a63dd" stroke-width="1"/></svg><a style="left:114.500px;top:4.98px">Copy</a><svg style="left:156px;top:6.98px" width="16" height="16" viewBox="0 0 16 16"><circle cx="8" cy="8" r="6.600" fill="#e0483f" stroke="#d2736c" stroke-width="1"/><path d="M2.300 6.300a6 6 0 0 1 11.400 0z" fill="#f19a92" opacity=".8"/><rect x="4.300" y="6.800" width="7.400" height="2.500" rx=".5" fill="#fff"/></svg><a style="left:176px;top:4.98px">Delete</a><span class="id" style="top:4.98px">5</span><span style="left:299.500px;top:4.98px">users_can_register</span><span style="left:466px;top:4.98px">0</span><span style="left:656px;top:4.98px">yes</span></div>
<div class="row even" style="top:520.60px;height:27.58px"><i class="cb" style="left:9px;top:7.40px"></i><svg style="left:41px;top:6.40px" width="16" height="16" viewBox="0 0 16 16"><path d="M.8 14.600l1.300-4.300 8.200-8.200c.9-.9 2-.9 2.900 0l.9.900c.9.900.9 2 0 2.900l-8.200 8.200z" fill="#f6de62" stroke="#c58a2e" stroke-width="1"/><path d="M2.100 10.300l3.800 3.800" stroke="#c58a2e" stroke-width=".9"/><path d="M4 11.800l7.600-7.600" stroke="#fdf3ad" stroke-width="1.800"/><path d="M.8 14.600l.6-2.100 1.600 1.600z" fill="#5a4632"/><path d="M9.600 2.800c1-1 2.300-1 3.200-.1l.8.800c.9.900.9 2.100 0 3.100z" fill="#f0b9a0" stroke="#c58a2e" stroke-width=".8"/></svg><a style="left:60px;top:5.40px">Edit</a><svg style="left:94px;top:6.40px" width="16" height="16" viewBox="0 0 16 16"><rect x=".8" y="1.200" width="5" height="13.600" fill="#d4d4d4"/><path d="M.5 1h5.500M.5 15h5.500M.5 5.500h3M.5 10.500h3" stroke="#222" stroke-width="1.200" fill="none"/><path d="M10 8h-5" stroke="#6a55dc" stroke-width="3.200"/><path d="M1.800 8l5.200-4.500v9z" fill="#6a55dc"/><rect x="10.500" y="6.300" width="3.600" height="4" fill="#f8cf3a" stroke="#7d6410" stroke-width=".8"/><path d="M12.300 1v3M10.800 2.500h3" stroke="#7a63dd" stroke-width="1"/></svg><a style="left:114.500px;top:5.40px">Copy</a><svg style="left:156px;top:6.40px" width="16" height="16" viewBox="0 0 16 16"><circle cx="8" cy="8" r="6.600" fill="#e0483f" stroke="#d2736c" stroke-width="1"/><path d="M2.300 6.300a6 6 0 0 1 11.400 0z" fill="#f19a92" opacity=".8"/><rect x="4.300" y="6.800" width="7.400" height="2.500" rx=".5" fill="#fff"/></svg><a style="left:176px;top:5.40px">Delete</a><span class="id" style="top:5.40px">6</span><span style="left:299.500px;top:5.40px">admin_email</span><span style="left:466px;top:5.40px">hello@fsdafdsavrf.satest.online</span><span style="left:656px;top:5.40px">yes</span></div>
<div class="row" style="top:548.18px;height:27.58px"><i class="cb" style="left:9px;top:6.82px"></i><svg style="left:41px;top:6.82px" width="16" height="16" viewBox="0 0 16 16"><path d="M.8 14.600l1.300-4.300 8.200-8.200c.9-.9 2-.9 2.900 0l.9.900c.9.900.9 2 0 2.900l-8.200 8.200z" fill="#f6de62" stroke="#c58a2e" stroke-width="1"/><path d="M2.100 10.300l3.800 3.800" stroke="#c58a2e" stroke-width=".9"/><path d="M4 11.800l7.600-7.600" stroke="#fdf3ad" stroke-width="1.800"/><path d="M.8 14.600l.6-2.100 1.600 1.600z" fill="#5a4632"/><path d="M9.600 2.800c1-1 2.300-1 3.200-.1l.8.800c.9.900.9 2.100 0 3.100z" fill="#f0b9a0" stroke="#c58a2e" stroke-width=".8"/></svg><a style="left:60px;top:5.82px">Edit</a><svg style="left:94px;top:6.82px" width="16" height="16" viewBox="0 0 16 16"><rect x=".8" y="1.200" width="5" height="13.600" fill="#d4d4d4"/><path d="M.5 1h5.500M.5 15h5.500M.5 5.500h3M.5 10.500h3" stroke="#222" stroke-width="1.200" fill="none"/><path d="M10 8h-5" stroke="#6a55dc" stroke-width="3.200"/><path d="M1.800 8l5.200-4.500v9z" fill="#6a55dc"/><rect x="10.500" y="6.300" width="3.600" height="4" fill="#f8cf3a" stroke="#7d6410" stroke-width=".8"/><path d="M12.300 1v3M10.800 2.500h3" stroke="#7a63dd" stroke-width="1"/></svg><a style="left:114.500px;top:5.82px">Copy</a><svg style="left:156px;top:6.82px" width="16" height="16" viewBox="0 0 16 16"><circle cx="8" cy="8" r="6.600" fill="#e0483f" stroke="#d2736c" stroke-width="1"/><path d="M2.300 6.300a6 6 0 0 1 11.400 0z" fill="#f19a92" opacity=".8"/><rect x="4.300" y="6.800" width="7.400" height="2.500" rx=".5" fill="#fff"/></svg><a style="left:176px;top:5.82px">Delete</a><span class="id" style="top:5.82px">7</span><span style="left:299.500px;top:5.82px">start_of_week</span><span style="left:466px;top:5.82px">1</span><span style="left:656px;top:5.82px">yes</span></div>
<div class="row even" style="top:575.76px;height:27.58px"><i class="cb" style="left:9px;top:7.24px"></i><svg style="left:41px;top:6.24px" width="16" height="16" viewBox="0 0 16 16"><path d="M.8 14.600l1.300-4.300 8.200-8.200c.9-.9 2-.9 2.900 0l.9.900c.9.900.9 2 0 2.900l-8.200 8.200z" fill="#f6de62" stroke="#c58a2e" stroke-width="1"/><path d="M2.100 10.300l3.800 3.800" stroke="#c58a2e" stroke-width=".9"/><path d="M4 11.800l7.600-7.600" stroke="#fdf3ad" stroke-width="1.800"/><path d="M.8 14.600l.6-2.100 1.600 1.600z" fill="#5a4632"/><path d="M9.600 2.800c1-1 2.300-1 3.200-.1l.8.800c.9.900.9 2.100 0 3.100z" fill="#f0b9a0" stroke="#c58a2e" stroke-width=".8"/></svg><a style="left:60px;top:5.24px">Edit</a><svg style="left:94px;top:6.24px" width="16" height="16" viewBox="0 0 16 16"><rect x=".8" y="1.200" width="5" height="13.600" fill="#d4d4d4"/><path d="M.5 1h5.500M.5 15h5.500M.5 5.500h3M.5 10.500h3" stroke="#222" stroke-width="1.200" fill="none"/><path d="M10 8h-5" stroke="#6a55dc" stroke-width="3.200"/><path d="M1.800 8l5.200-4.500v9z" fill="#6a55dc"/><rect x="10.500" y="6.300" width="3.600" height="4" fill="#f8cf3a" stroke="#7d6410" stroke-width=".8"/><path d="M12.300 1v3M10.800 2.500h3" stroke="#7a63dd" stroke-width="1"/></svg><a style="left:114.500px;top:5.24px">Copy</a><svg style="left:156px;top:6.24px" width="16" height="16" viewBox="0 0 16 16"><circle cx="8" cy="8" r="6.600" fill="#e0483f" stroke="#d2736c" stroke-width="1"/><path d="M2.300 6.300a6 6 0 0 1 11.400 0z" fill="#f19a92" opacity=".8"/><rect x="4.300" y="6.800" width="7.400" height="2.500" rx=".5" fill="#fff"/></svg><a style="left:176px;top:5.24px">Delete</a><span class="id" style="top:5.24px">8</span><span style="left:299.500px;top:5.24px">use_balanceTags</span><span style="left:466px;top:5.24px">0</span><span style="left:656px;top:5.24px">yes</span></div>
<div class="row" style="top:603.34px;height:27.58px"><i class="cb" style="left:9px;top:6.66px"></i><svg style="left:41px;top:6.66px" width="16" height="16" viewBox="0 0 16 16"><path d="M.8 14.600l1.300-4.300 8.200-8.200c.9-.9 2-.9 2.900 0l.9.900c.9.900.9 2 0 2.900l-8.200 8.200z" fill="#f6de62" stroke="#c58a2e" stroke-width="1"/><path d="M2.100 10.300l3.800 3.800" stroke="#c58a2e" stroke-width=".9"/><path d="M4 11.800l7.600-7.600" stroke="#fdf3ad" stroke-width="1.800"/><path d="M.8 14.600l.6-2.100 1.600 1.600z" fill="#5a4632"/><path d="M9.600 2.800c1-1 2.300-1 3.200-.1l.8.800c.9.900.9 2.100 0 3.100z" fill="#f0b9a0" stroke="#c58a2e" stroke-width=".8"/></svg><a style="left:60px;top:5.66px">Edit</a><svg style="left:94px;top:6.66px" width="16" height="16" viewBox="0 0 16 16"><rect x=".8" y="1.200" width="5" height="13.600" fill="#d4d4d4"/><path d="M.5 1h5.500M.5 15h5.500M.5 5.500h3M.5 10.500h3" stroke="#222" stroke-width="1.200" fill="none"/><path d="M10 8h-5" stroke="#6a55dc" stroke-width="3.200"/><path d="M1.800 8l5.200-4.500v9z" fill="#6a55dc"/><rect x="10.500" y="6.300" width="3.600" height="4" fill="#f8cf3a" stroke="#7d6410" stroke-width=".8"/><path d="M12.300 1v3M10.800 2.500h3" stroke="#7a63dd" stroke-width="1"/></svg><a style="left:114.500px;top:5.66px">Copy</a><svg style="left:156px;top:6.66px" width="16" height="16" viewBox="0 0 16 16"><circle cx="8" cy="8" r="6.600" fill="#e0483f" stroke="#d2736c" stroke-width="1"/><path d="M2.300 6.300a6 6 0 0 1 11.400 0z" fill="#f19a92" opacity=".8"/><rect x="4.300" y="6.800" width="7.400" height="2.500" rx=".5" fill="#fff"/></svg><a style="left:176px;top:5.66px">Delete</a><span class="id" style="top:5.66px">9</span><span style="left:299.500px;top:5.66px">use_smilies</span><span style="left:466px;top:5.66px">1</span><span style="left:656px;top:5.66px">yes</span></div>
<div class="row even" style="top:630.92px;height:26.58px"><i class="cb" style="left:9px;top:7.08px"></i><svg style="left:41px;top:7.08px" width="16" height="16" viewBox="0 0 16 16"><path d="M.8 14.600l1.300-4.300 8.200-8.200c.9-.9 2-.9 2.900 0l.9.900c.9.900.9 2 0 2.900l-8.200 8.200z" fill="#f6de62" stroke="#c58a2e" stroke-width="1"/><path d="M2.100 10.300l3.800 3.800" stroke="#c58a2e" stroke-width=".9"/><path d="M4 11.800l7.600-7.600" stroke="#fdf3ad" stroke-width="1.800"/><path d="M.8 14.600l.6-2.100 1.600 1.600z" fill="#5a4632"/><path d="M9.600 2.800c1-1 2.300-1 3.200-.1l.8.800c.9.900.9 2.100 0 3.100z" fill="#f0b9a0" stroke="#c58a2e" stroke-width=".8"/></svg><a style="left:60px;top:5.08px">Edit</a><svg style="left:94px;top:7.08px" width="16" height="16" viewBox="0 0 16 16"><rect x=".8" y="1.200" width="5" height="13.600" fill="#d4d4d4"/><path d="M.5 1h5.500M.5 15h5.500M.5 5.500h3M.5 10.500h3" stroke="#222" stroke-width="1.200" fill="none"/><path d="M10 8h-5" stroke="#6a55dc" stroke-width="3.200"/><path d="M1.800 8l5.200-4.500v9z" fill="#6a55dc"/><rect x="10.500" y="6.300" width="3.600" height="4" fill="#f8cf3a" stroke="#7d6410" stroke-width=".8"/><path d="M12.300 1v3M10.800 2.500h3" stroke="#7a63dd" stroke-width="1"/></svg><a style="left:114.500px;top:5.08px">Copy</a><svg style="left:156px;top:7.08px" width="16" height="16" viewBox="0 0 16 16"><circle cx="8" cy="8" r="6.600" fill="#e0483f" stroke="#d2736c" stroke-width="1"/><path d="M2.300 6.300a6 6 0 0 1 11.400 0z" fill="#f19a92" opacity=".8"/><rect x="4.300" y="6.800" width="7.400" height="2.500" rx=".5" fill="#fff"/></svg><a style="left:176px;top:5.08px">Delete</a><span class="id" style="top:5.08px">10</span><span style="left:299.500px;top:5.08px">require_name_email</span><span style="left:466px;top:5.08px">1</span><span style="left:656px;top:5.08px">yes</span></div>

<!-- red annotations -->
<div class="abs" style="left:14px;top:420px;width:214px;height:25px;border:3px solid #fe0000"></div>
<div class="abs" style="left:703px;top:385px;width:264px;height:50px;border:3px solid #fe0000"></div>
<svg class="abs" style="left:0;top:0;pointer-events:none" width="1659" height="663" viewBox="0 0 1659 663"><g fill="#fe0000"><path d="M1032.700 393.400L974 409.200 972 407.500 966.500 412.500 973.500 414.600 973.800 412.700L1033 394.600z"/><path d="M219 472.200L182.500 450 183.200 448.600 177 448.800 179.800 454 180.800 452.600 218.300 473z"/></g></svg>

</body>
</html>
